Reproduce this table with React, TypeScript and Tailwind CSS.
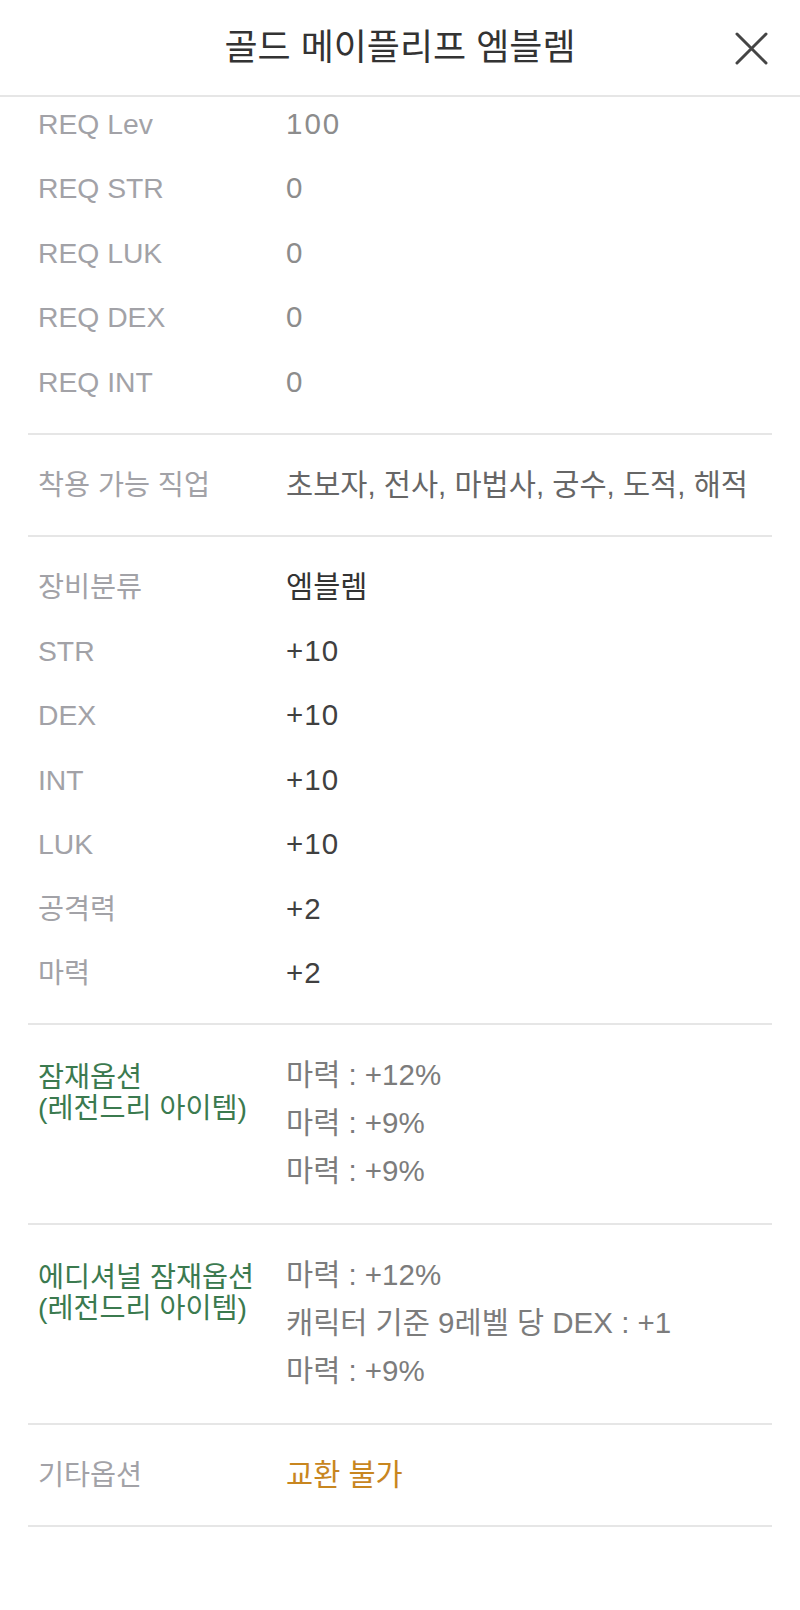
const font = "font-['Liberation_Sans','Noto_Sans_CJK_KR',sans-serif]"

const reqRows = [
  ["REQ Lev", "100"],
  ["REQ STR", "0"],
  ["REQ LUK", "0"],
  ["REQ DEX", "0"],
  ["REQ INT", "0"],
]

const statRows = [
  ["STR", "+10"],
  ["DEX", "+10"],
  ["INT", "+10"],
  ["LUK", "+10"],
  ["공격력", "+2"],
  ["마력", "+2"],
]

function Row({ label, children, valueClass }: { label: string; children: React.ReactNode; valueClass: string }) {
  return (
    <div className="flex leading-[40px]">
      <div className="w-[258px] shrink-0 pl-[10px] text-[28.3px] text-[#a2a2a7]">{label}</div>
      <div className={`text-[29.5px] ${valueClass}`}>{children}</div>
    </div>
  )
}

function Divider() {
  return <div className="mx-[28px] h-[2px] bg-[#e6e6e6]" />
}

function PotentialSection({ title, lines }: { title: string; lines: string[] }) {
  return (
    <section className="flex px-[28px] pt-[30px] pb-[32px]">
      <div className="w-[258px] shrink-0 pl-[10px] pt-[7px] text-[28.3px] leading-[31px] text-[#3b7a4f]">
        <div>{title}</div>
        <div>(레전드리 아이템)</div>
      </div>
      <div className="flex flex-col gap-[8px] text-[29.5px] leading-[40px] text-[#7c7c7c]">
        {lines.map((l, i) => (
          <div key={i}>{l}</div>
        ))}
      </div>
    </section>
  )
}

export default function App() {
  return (
    <div className={`${font} w-[800px] min-h-[1610px] bg-white`}>
      {/* Header */}
      <header className="grid h-[97px] grid-cols-[1fr_auto_1fr] items-center border-b-2 border-[#e6e6e6]">
        <div />
        <h1 className="text-[36px] leading-none text-[#333333]">골드 메이플리프 엠블렘</h1>
        <div className="flex justify-end pr-[32px]">
          <svg width="33" height="33" viewBox="0 0 33 33" className="mt-[1px]">
            <path d="M2 2 L31 31 M31 2 L2 31" stroke="#454545" strokeWidth="3" strokeLinecap="round" fill="none" />
          </svg>
        </div>
      </header>

      {/* REQ */}
      <section className="flex flex-col gap-[24.4px] px-[28px] pt-[7px] pb-[31px]">
        {reqRows.map(([l, v]) => (
          <Row key={l} label={l} valueClass="tracking-[2px] text-[#8c8c8c]">
            {v}
          </Row>
        ))}
      </section>
      <Divider />

      {/* Jobs */}
      <section className="px-[28px] py-[30px]">
        <Row label="착용 가능 직업" valueClass="text-[#666666]">
          초보자, 전사, 마법사, 궁수, 도적, 해적
        </Row>
      </section>
      <Divider />

      {/* Stats */}
      <section className="flex flex-col gap-[24.4px] px-[28px] py-[30px]">
        <Row label="장비분류" valueClass="text-[#333333]">
          엠블렘
        </Row>
        {statRows.map(([l, v]) => (
          <Row key={l} label={l} valueClass="tracking-[1px] text-[#404040]">
            {v}
          </Row>
        ))}
      </section>
      <Divider />

      <PotentialSection title="잠재옵션" lines={["마력 : +12%", "마력 : +9%", "마력 : +9%"]} />
      <Divider />

      <PotentialSection
        title="에디셔널 잠재옵션"
        lines={["마력 : +12%", "캐릭터 기준 9레벨 당 DEX : +1", "마력 : +9%"]}
      />
      <Divider />

      {/* Etc */}
      <section className="px-[28px] py-[30px]">
        <Row label="기타옵션" valueClass="text-[#c8861f]">
          교환 불가
        </Row>
      </section>
      <Divider />
    </div>
  )
}
